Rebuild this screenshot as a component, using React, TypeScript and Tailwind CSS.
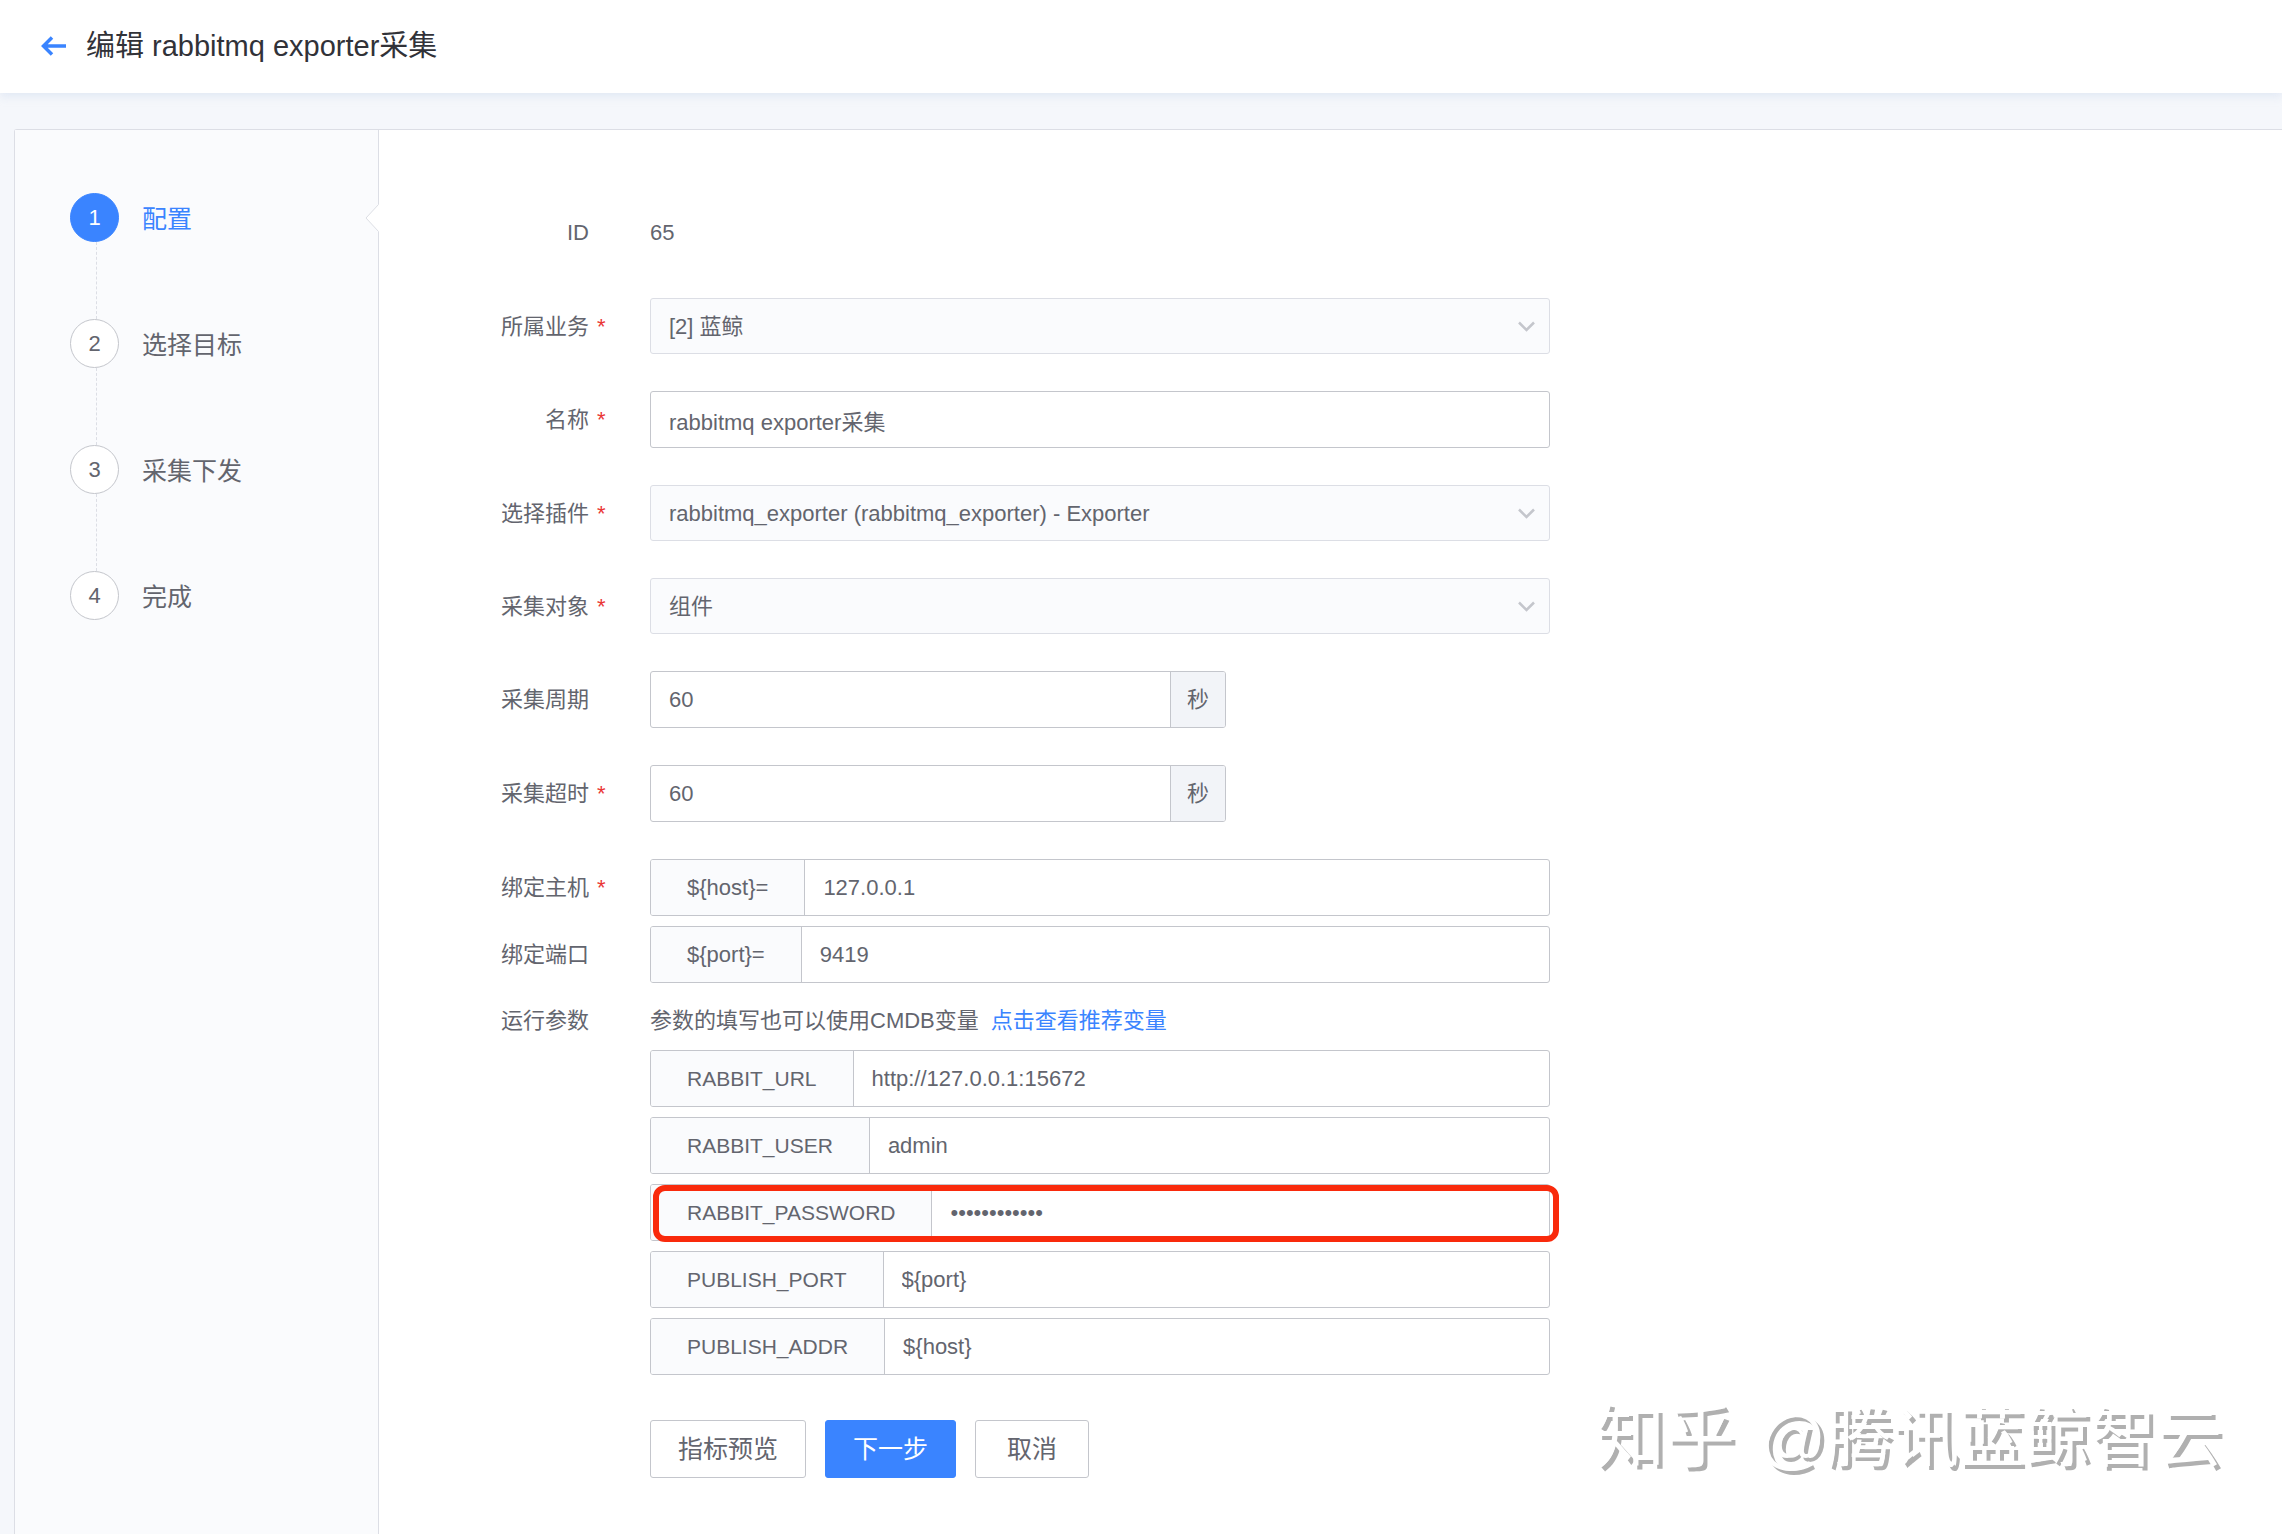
import { useState } from "react";

const steps = ["配置", "选择目标", "采集下发", "完成"];

const params = [
  { name: "RABBIT_URL", value: "http://127.0.0.1:15672" },
  { name: "RABBIT_USER", value: "admin" },
  { name: "RABBIT_PASSWORD", value: "rabbitmq1234", secret: true },
  { name: "PUBLISH_PORT", value: "${port}" },
  { name: "PUBLISH_ADDR", value: "${host}" },
];

interface FieldRowProps {
  label: string;
  htmlFor: string;
  required?: boolean;
  children: React.ReactNode;
}

function FieldRow({ label, htmlFor, required, children }: FieldRowProps) {
  return (
    <div className="flex items-center">
      <label htmlFor={htmlFor} className="w-[210px] shrink-0 text-right">
        {label}
      </label>
      <span className="w-[61px] shrink-0 pl-2 text-[#ea3636]">{required ? "*" : ""}</span>
      {children}
    </div>
  );
}

function SelectField({ id, value }: { id: string; value: string }) {
  return (
    <div className="relative w-full max-w-[900px]">
      <select
        id={id}
        disabled
        className="block h-14 w-full appearance-none rounded-[3px] border border-[#dcdee5] bg-[#fafbfd] px-[18px] text-[#63656e] opacity-100"
      >
        <option>{value}</option>
      </select>
      <svg
        className="pointer-events-none absolute top-[23px] right-[15px] h-[11px] w-[17px] text-[#c4c6cc]"
        viewBox="0 0 17 11"
        fill="none"
        stroke="currentColor"
        strokeWidth="2.500"
      >
        <path d="M1 1.5l7.500 7.500l7.500-7.500" />
      </svg>
    </div>
  );
}

function SecondsField({ id, value }: { id: string; value: string }) {
  const [seconds, setSeconds] = useState(value);

  return (
    <div className="flex h-[57px] w-full max-w-[576px] overflow-hidden rounded-[3px] border border-[#c4c6cc]">
      <input
        id={id}
        value={seconds}
        onChange={(e) => setSeconds(e.target.value)}
        className="min-w-0 flex-1 px-[18px] outline-none"
      />
      <span className="flex items-center border-l border-[#c4c6cc] bg-[#f2f4f8] px-4">秒</span>
    </div>
  );
}

interface ParamFieldProps {
  id: string;
  name: string;
  value: string;
  secret?: boolean;
}

function ParamField({ id, name, value, secret }: ParamFieldProps) {
  const [text, setText] = useState(value);

  return (
    <div className="relative w-full max-w-[900px]">
      <div className="flex h-[57px] overflow-hidden rounded-[3px] border border-[#c4c6cc]">
        <label htmlFor={id} className="flex items-center border-r border-[#c4c6cc] bg-[#fafbfd] px-9">
          {name}
        </label>
        <input
          id={id}
          type={secret ? "password" : "text"}
          value={text}
          onChange={(e) => setText(e.target.value)}
          className="min-w-0 flex-1 px-[18px] text-[22px] outline-none"
        />
      </div>
      {/* Highlight around the password row */}
      {secret && (
        <div className="pointer-events-none absolute top-px -right-[9px] -bottom-px left-[3px] rounded-xl border-6 border-[#f92a0c]" />
      )}
    </div>
  );
}

export default function App() {
  const [name, setName] = useState("rabbitmq exporter采集");
  const current = 0;

  return (
    <div className="relative flex min-h-screen flex-col bg-[#f5f7fb] font-['Liberation_Sans','Noto_Sans_CJK_SC',sans-serif] text-[22px] text-[#63656e]">
      <header className="flex h-[93px] items-center gap-5 bg-white px-10 shadow-[0_4px_8px_rgba(220,228,242,0.7)]">
        <a href="#back" aria-label="返回" className="pb-0.5">
          <svg className="h-6 w-[26px] text-[#3a84ff]" viewBox="0 0 26 24" fill="none" stroke="currentColor" strokeWidth="3.500">
            <path d="M12 3.500L3.500 12L12 20.500M3.500 12H26" />
          </svg>
        </a>
        <h1 className="text-[29px] text-[#313238]">编辑 rabbitmq exporter采集</h1>
      </header>

      <div className="mt-9 ml-3.5 flex flex-1 rounded-tl-[3px] border-t border-l border-[#dcdee5] bg-white">
        <aside className="relative w-[364px] shrink-0 border-r border-[#dcdee5] bg-[#fafbfd] pt-[63px] pl-[55px]">
          <ol>
            {steps.map((step, index) => (
              <li key={step} className="flex gap-[23px]">
                <div className="flex flex-col items-center">
                  <span
                    className={`flex size-[49px] items-center justify-center rounded-full border ${
                      index === current
                        ? "border-[#3a84ff] bg-[#3a84ff] text-white"
                        : "border-[#c4c6cc] bg-white"
                    }`}
                  >
                    {index + 1}
                  </span>
                  {index < steps.length - 1 && (
                    <span className="ml-1 h-[77px] border-l border-dashed border-[#dcdee5]" />
                  )}
                </div>
                <span className={`flex h-[54px] items-center text-[25px] ${index === current ? "text-[#3a84ff]" : ""}`}>
                  {step}
                </span>
              </li>
            ))}
          </ol>
          {/* Notch pointing at the active step */}
          <svg className="absolute top-[74px] -right-px h-7 w-3.5" viewBox="0 0 14 28">
            <path d="M14 0L1 14L14 28Z" fill="#fff" />
            <path d="M13.500 0.500L1 14L13.500 27.500" fill="none" stroke="#dcdee5" />
          </svg>
        </aside>

        <main className="flex-1 pt-[73px] pb-14">
          <form className="flex flex-col" onSubmit={(e) => e.preventDefault()}>
            <div className="flex flex-col gap-[37px]">
              <FieldRow label="ID" htmlFor="config-id">
                <output id="config-id" className="flex h-[58px] items-center">65</output>
              </FieldRow>
              <FieldRow label="所属业务" htmlFor="biz" required>
                <SelectField id="biz" value="[2] 蓝鲸" />
              </FieldRow>
              <FieldRow label="名称" htmlFor="name" required>
                <input
                  id="name"
                  value={name}
                  onChange={(e) => setName(e.target.value)}
                  className="h-[57px] w-full max-w-[900px] rounded-[3px] border border-[#c4c6cc] px-[18px] outline-none"
                />
              </FieldRow>
              <FieldRow label="选择插件" htmlFor="plugin" required>
                <SelectField id="plugin" value="rabbitmq_exporter (rabbitmq_exporter) - Exporter" />
              </FieldRow>
              <FieldRow label="采集对象" htmlFor="target" required>
                <SelectField id="target" value="组件" />
              </FieldRow>
              <FieldRow label="采集周期" htmlFor="period">
                <SecondsField id="period" value="60" />
              </FieldRow>
              <FieldRow label="采集超时" htmlFor="timeout" required>
                <SecondsField id="timeout" value="60" />
              </FieldRow>
              <FieldRow label="绑定主机" htmlFor="host" required>
                <ParamField id="host" name="${host}=" value="127.0.0.1" />
              </FieldRow>
            </div>

            <div className="mt-2.5">
              <FieldRow label="绑定端口" htmlFor="port">
                <ParamField id="port" name="${port}=" value="9419" />
              </FieldRow>
            </div>

            <div className="flex h-[67px] items-center pt-2">
              <span className="w-[210px] shrink-0 text-right">运行参数</span>
              <p className="pl-[61px]">
                参数的填写也可以使用CMDB变量
                <a href="#variables" className="ml-3 text-[#3a84ff]">点击查看推荐变量</a>
              </p>
            </div>

            <div className="flex flex-col gap-2.5 pl-[271px] text-[21px]">
              {params.map((param) => (
                <ParamField key={param.name} id={param.name} {...param} />
              ))}
            </div>

            <div className="mt-[45px] flex gap-[19px] pl-[271px] text-[25px]">
              <button type="button" className="h-[58px] rounded-[3px] border border-[#c4c6cc] bg-white px-[27px] pt-0.5">
                指标预览
              </button>
              <button type="submit" className="h-[58px] rounded-[3px] border border-[#3a84ff] bg-[#3a84ff] px-[27px] pt-0.5 text-white">
                下一步
              </button>
              <button type="button" className="h-[58px] rounded-[3px] border border-[#c4c6cc] bg-white px-[31px] pt-0.5">
                取消
              </button>
            </div>
          </form>
        </main>
      </div>

      <div className="pointer-events-none absolute right-[60px] bottom-[51px] flex items-center gap-6 text-[66px] leading-[90px] text-white [text-shadow:4px_4px_0_#b0b0b0]">
        <span className="text-[70px]">知乎</span>
        <span>@腾讯蓝鲸智云</span>
      </div>
    </div>
  );
}
